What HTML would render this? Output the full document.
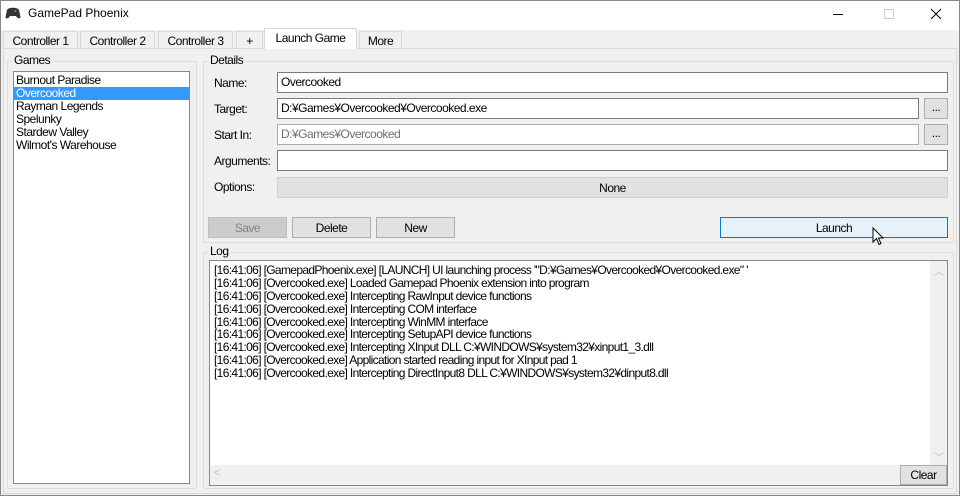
<!DOCTYPE html>
<html><head><meta charset="utf-8"><style>
*{box-sizing:border-box;margin:0;padding:0}
body{width:960px;height:496px;background:#f0f0f0;font-family:"Liberation Sans","Noto Sans CJK JP",sans-serif;font-size:12px;color:#000;position:relative;overflow:hidden;letter-spacing:-0.5px}
.a{position:absolute}
.win{left:0;top:0;width:960px;height:496px;border:1px solid #888}
.title{left:1px;top:1px;width:958px;height:29px;background:#fff}
.tab{top:31px;height:17px;border:1px solid #d9d9d9;border-bottom:none;background:#f0f0f0;text-align:center;line-height:18px;font-size:12px}
.tab.s{top:28px;height:21px;background:#fff;border-color:#d9d9d9;line-height:18px}
.page{left:3px;top:48px;width:954px;height:446px;border:1px solid #d9d9d9;background:#f0f0f0}
.grp{border:1px solid #dcdcdc;border-radius:2px}
.glab{background:#f0f0f0;padding:0 2px;line-height:12px}
.inp{background:#fff;border:1px solid #7a7a7a;height:21px;line-height:19px;padding-left:3px}
.btn{background:#e1e1e1;border:1px solid #adadad;height:21px;line-height:19px;text-align:center}
.lbl{line-height:14px}
.list div{height:13px;line-height:13px;padding-left:2px}
.log div{height:12.9px;line-height:12.9px;letter-spacing:-0.65px}
</style></head><body>
<div class="a win"></div>
<div class="a title"></div>
<svg class="a" style="left:5px;top:6px" width="16" height="14" viewBox="0 0 16 14"><path d="M2 4 C3 1 13 1 14 4 L15.5 11 C15 13 13 13 11 10 L5 10 C3 13 1 13 0.5 11 Z" fill="#333"/><circle cx="10.5" cy="5" r="1" fill="#888"/></svg>
<div class="a" style="left:28px;top:6px;font-size:12px;letter-spacing:0">GamePad Phoenix</div>
<div class="a" style="left:833px;top:14px;width:10px;height:1px;background:#000"></div>
<div class="a" style="left:884px;top:9px;width:10px;height:10px;border:1px solid #ccc"></div>
<svg class="a" style="left:930px;top:8px" width="12" height="12"><path d="M1 1L11 11M11 1L1 11" stroke="#000" stroke-width="1"/></svg>
<div class="a page"></div>
<div class="a tab" style="left:3px;width:75px">Controller 1</div>
<div class="a tab" style="left:80px;width:75px">Controller 2</div>
<div class="a tab" style="left:158px;width:75px">Controller 3</div>
<div class="a tab" style="left:236px;width:27px">+</div>
<div class="a tab s" style="left:264px;width:93px">Launch Game</div>
<div class="a tab" style="left:359px;width:43px">More</div>

<div class="a grp" style="left:7px;top:61px;width:190px;height:428px"></div>
<div class="a glab" style="left:12px;top:54px">Games</div>
<div class="a list" style="left:13px;top:71px;width:177px;height:413px;background:#fff;border:1px solid #828790;padding-top:2px">
<div>Burnout Paradise</div><div style="background:#3399ff;color:#fff">Overcooked</div><div>Rayman Legends</div><div>Spelunky</div><div>Stardew Valley</div><div>Wilmot's Warehouse</div></div>

<div class="a grp" style="left:203px;top:61px;width:751px;height:182px"></div>
<div class="a glab" style="left:208px;top:54px">Details</div>
<div class="a lbl" style="left:214px;top:76px">Name:</div>
<div class="a inp" style="left:277px;top:72px;width:671px">Overcooked</div>
<div class="a lbl" style="left:214px;top:102px">Target:</div>
<div class="a inp" style="left:277px;top:98px;width:642px">D:¥Games¥Overcooked¥Overcooked.exe</div>
<div class="a btn" style="left:924px;top:98px;width:24px;line-height:16px">...</div>
<div class="a lbl" style="left:214px;top:128px">Start In:</div>
<div class="a inp" style="left:277px;top:124px;width:642px;color:#6d6d6d;border-color:#adadad">D:¥Games¥Overcooked</div>
<div class="a btn" style="left:924px;top:124px;width:24px;line-height:16px">...</div>
<div class="a lbl" style="left:214px;top:154px">Arguments:</div>
<div class="a inp" style="left:277px;top:150px;width:671px"></div>
<div class="a lbl" style="left:214px;top:180px">Options:</div>
<div class="a btn" style="left:277px;top:177px;width:671px;border-color:#cfcfcf;line-height:20px">None</div>
<div class="a btn" style="left:208px;top:217px;width:79px;background:#cccccc;border-color:#bfbfbf;color:#838383;line-height:20px">Save</div>
<div class="a btn" style="left:292px;top:217px;width:79px;line-height:20px">Delete</div>
<div class="a btn" style="left:376px;top:217px;width:79px;line-height:20px">New</div>
<div class="a btn" style="left:720px;top:217px;width:228px;background:#e5f1fb;border-color:#0078d7;line-height:20px">Launch</div>
<svg class="a" style="left:872px;top:227px" width="14" height="20"><path d="M1 1 L1 15 L4.5 11.5 L7 17.5 L9 16.5 L6.5 11 L11 11 Z" fill="#fff" stroke="#000" stroke-width="1"/></svg>

<div class="a grp" style="left:203px;top:252px;width:751px;height:237px"></div>
<div class="a glab" style="left:208px;top:245px">Log</div>
<div class="a log" style="left:209px;top:260px;width:739px;height:226px;background:#fff;border:1px solid #828790;padding:3px 0 0 4px">
<div>[16:41:06] [GamepadPhoenix.exe] [LAUNCH] UI launching process '"D:¥Games¥Overcooked¥Overcooked.exe" '</div>
<div>[16:41:06] [Overcooked.exe] Loaded Gamepad Phoenix extension into program</div>
<div>[16:41:06] [Overcooked.exe] Intercepting RawInput device functions</div>
<div>[16:41:06] [Overcooked.exe] Intercepting COM interface</div>
<div>[16:41:06] [Overcooked.exe] Intercepting WinMM interface</div>
<div>[16:41:06] [Overcooked.exe] Intercepting SetupAPI device functions</div>
<div>[16:41:06] [Overcooked.exe] Intercepting XInput DLL C:¥WINDOWS¥system32¥xinput1_3.dll</div>
<div>[16:41:06] [Overcooked.exe] Application started reading input for XInput pad 1</div>
<div>[16:41:06] [Overcooked.exe] Intercepting DirectInput8 DLL C:¥WINDOWS¥system32¥dinput8.dll</div>
</div>
<div class="a" style="left:930px;top:261px;width:17px;height:204px;background:#f0f0f0"></div>
<div class="a" style="left:934px;top:263px;color:#bbb;font-size:10px">︿</div>
<div class="a" style="left:934px;top:449px;color:#bbb;font-size:10px">﹀</div>
<div class="a" style="left:210px;top:465px;width:737px;height:20px;background:#f0f0f0"></div>
<div class="a" style="left:214px;top:467px;color:#bbb;font-size:11px">&lt;</div>
<div class="a btn" style="left:900px;top:465px;width:47px;height:20px;line-height:18px">Clear</div>
</body></html>
